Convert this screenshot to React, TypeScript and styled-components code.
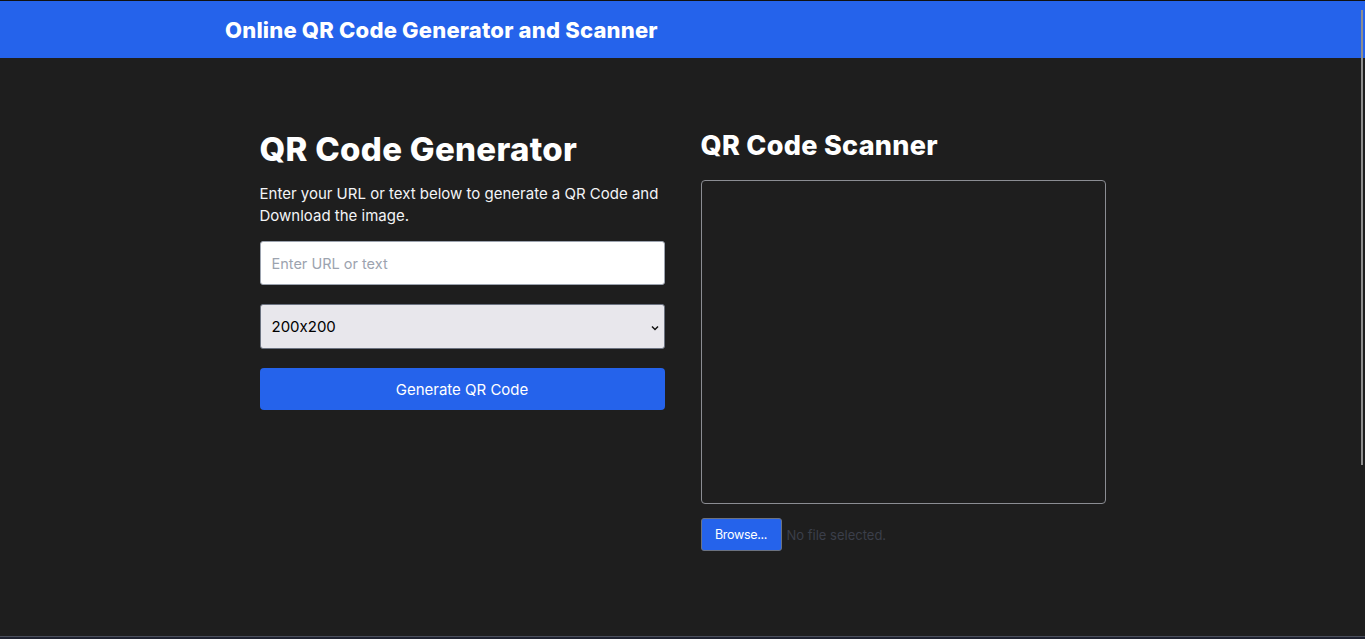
import React from "react";
import styled, { createGlobalStyle } from "styled-components";

const Global = createGlobalStyle`
  html, body { margin: 0; padding: 0; }
  body {
    background: #1e1e1e;
    font-family: "Inter", "Liberation Sans", sans-serif;
    font-feature-settings: "calt" 0;
    color: #ffffff;
  }
  * { box-sizing: border-box; }
  input, select, button { font-feature-settings: "calt" 0; }
`;

const Page = styled.div`
  min-height: 639px;
  display: flex;
  flex-direction: column;
  background: #1e1e1e;
  border-top: 1px solid #111111;
`;

const Header = styled.header`
  height: 57px;
  background: #2563eb;
  display: flex;
  align-items: center;
  padding-left: 225px;
`;

const Brand = styled.h1`
  margin: 0;
  font-family: "Inter", sans-serif;
  font-weight: 800;
  font-size: 22px;
  letter-spacing: 0.2px;
  color: #ffffff;
`;

const Main = styled.main`
  flex: 1;
  display: flex;
  justify-content: center;
  gap: 36px;
  padding-top: 72px;
`;

const Column = styled.section`
  width: 405px;
  display: flex;
  flex-direction: column;
`;

const Title = styled.h2<{ $size: number; $line: number }>`
  margin: 0;
  font-family: "Inter", sans-serif;
  font-weight: 800;
  font-size: ${(p) => p.$size}px;
  line-height: ${(p) => p.$line}px;
  color: #ffffff;
  letter-spacing: 0.3px;
`;

const Lead = styled.p`
  margin: 15px 0 14px;
  font-size: 15px;
  line-height: 22px;
  color: #f3f4f6;
`;

const TextInput = styled.input`
  width: 100%;
  height: 44px;
  border: 1px solid #9ca3af;
  border-radius: 3px;
  background: #ffffff;
  padding: 0 11px;
  font-family: "Inter", sans-serif;
  font-size: 14.5px;
  color: #111827;
  &::placeholder { color: #9ca3af; }
`;

const SelectWrap = styled.div`
  position: relative;
  margin-top: 19px;
`;

const Select = styled.select`
  width: 100%;
  height: 45px;
  appearance: none;
  border: 1px solid #6b7280;
  border-radius: 3px;
  background: #e8e7ec;
  padding: 0 11px;
  font-family: "Inter", sans-serif;
  font-size: 15px;
  color: #000000;
`;

const Chevron = styled.svg`
  position: absolute;
  right: 5px;
  top: 19px;
  width: 10px;
  height: 10px;
  pointer-events: none;
`;

const PrimaryButton = styled.button`
  margin-top: 19px;
  height: 42px;
  width: 100%;
  border: none;
  border-radius: 4px;
  background: #2563eb;
  color: #ffffff;
  font-family: "Inter", sans-serif;
  font-size: 15px;
  cursor: pointer;
`;

const ScanBox = styled.div`
  margin-top: 19px;
  width: 405px;
  height: 324px;
  border: 1px solid #8b8d93;
  border-radius: 4px;
  background: #1e1e1e;
`;

const FileRow = styled.div`
  margin-top: 14px;
  display: flex;
  align-items: center;
  gap: 5px;
`;

const BrowseButton = styled.button`
  width: 81px;
  height: 33px;
  border: 1px solid #6b7280;
  border-radius: 3px;
  background: #2563eb;
  color: #ffffff;
  font-family: "Inter", sans-serif;
  font-size: 12.5px;
  letter-spacing: -0.3px;
  padding: 0;
`;

const FileLabel = styled.span`
  font-family: "Inter", sans-serif;
  font-size: 13px;
  color: #3b3f4a;
`;

const Footer = styled.div`
  height: 3px;
  border-top: 1px solid #4b4f5c;
  background: #1f2230;
`;

const ScrollHint = styled.div`
  position: fixed;
  top: 10px;
  right: 2px;
  width: 2px;
  height: 455px;
  background: #8e8e8e;
`;

export default function App() {
  return (
    <>
      <Global />
      <Page>
        <Header>
          <Brand>Online QR Code Generator and Scanner</Brand>
        </Header>
        <Main>
          <Column>
            <Title $size={33} $line={38}>QR Code Generator</Title>
            <Lead>
              Enter your URL or text below to generate a QR Code and Download the image.
            </Lead>
            <TextInput placeholder="Enter URL or text" />
            <SelectWrap>
              <Select defaultValue="200x200">
                <option>100x100</option>
                <option>200x200</option>
                <option>300x300</option>
              </Select>
              <Chevron viewBox="0 0 10 10">
                <path d="M2 3.5 L5 6.5 L8 3.5" fill="none" stroke="#111" strokeWidth="1.5" />
              </Chevron>
            </SelectWrap>
            <PrimaryButton>Generate QR Code</PrimaryButton>
          </Column>
          <Column>
            <Title $size={27} $line={31}>QR Code Scanner</Title>
            <ScanBox />
            <FileRow>
              <BrowseButton>Browse...</BrowseButton>
              <FileLabel>No file selected.</FileLabel>
            </FileRow>
          </Column>
        </Main>
        <Footer />
        <ScrollHint />
      </Page>
    </>
  );
}
